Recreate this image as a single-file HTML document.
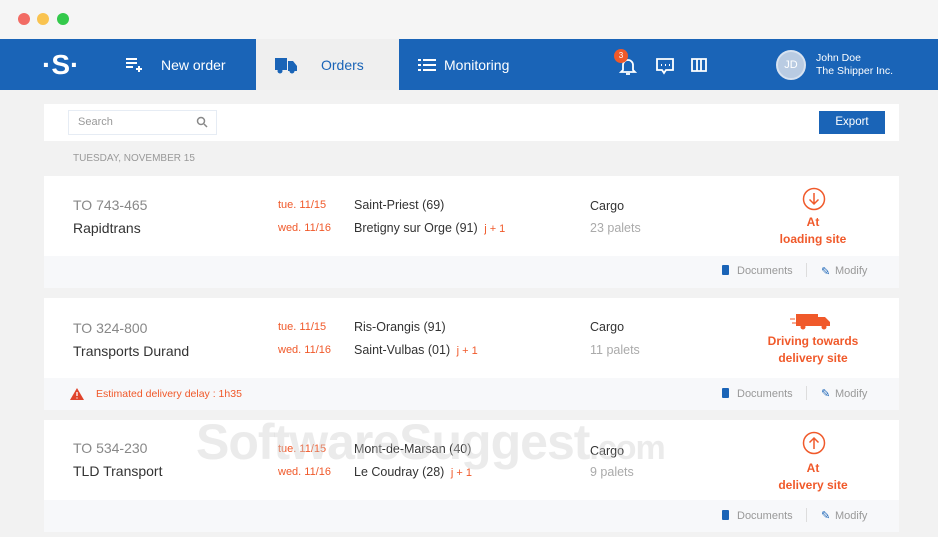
<!DOCTYPE html>
<html><head><meta charset="utf-8"><style>
*{margin:0;padding:0;box-sizing:border-box}
body{width:938px;height:537px;overflow:hidden;background:#f2f2f2;font-family:"Liberation Sans",sans-serif;position:relative}
.a{position:absolute}
.tb{left:0;top:0;width:938px;height:39px;background:#f5f5f5}
.dot{width:12px;height:12px;border-radius:50%;top:13px}
.nav{left:0;top:39px;width:938px;height:51px;background:#1a64b7}
.tab{left:256px;top:39px;width:143px;height:51px;background:#efefef}
.w{color:#fff;font-size:14px}
.card{left:44px;width:855px;height:80px;background:#fff}
.foot{left:44px;width:855px;height:32px;background:#f7f8fa}
.g{color:#888;font-size:14px}
.k{color:#333;font-size:14px}
.o{color:#f0592a;font-size:11px}
.c{color:#333;font-size:12.5px}
.st{color:#f0592a;font-size:12px;font-weight:bold;text-align:center;width:120px;line-height:17px}
.lk{color:#999;font-size:11px}
</style></head><body>
<div class="a tb"></div>
<div class="a dot" style="left:18px;background:#f26b64"></div>
<div class="a dot" style="left:37px;background:#f9c350"></div>
<div class="a dot" style="left:57px;background:#33c94b"></div>
<div class="a nav"></div>
<div class="a tab"></div>
<div class="a w" style="left:42px;top:49px;font-size:28px;font-weight:bold">·S·</div>
<svg class="a" style="left:125px;top:57px" width="20" height="16"><g stroke="#fff" stroke-width="2"><path d="M1 2h11M1 6h11M1 10h7M14 9v6M11 12h6"/></g></svg>
<div class="a w" style="left:161px;top:57px">New order</div>
<svg class="a" style="left:274px;top:56px" width="24" height="18"><rect x="1" y="2" width="12" height="12" fill="#1a64b7"/><path d="M14 5h5l4 5v5h-9z" fill="#1a64b7"/><circle cx="6" cy="15" r="2.5" fill="#1a64b7"/><circle cx="18" cy="15" r="2.5" fill="#1a64b7"/></svg>
<div class="a" style="left:321px;top:57px;color:#1a64b7;font-size:14px">Orders</div>
<svg class="a" style="left:418px;top:58px" width="18" height="15"><g stroke="#fff" stroke-width="2"><path d="M0 2h3M5 2h13M0 7h3M5 7h13M0 12h3M5 12h13"/></g></svg>
<div class="a w" style="left:444px;top:57px">Monitoring</div>
<svg class="a" style="left:619px;top:56px" width="18" height="20"><path d="M4 14V9a5 5 0 0110 0v5l2 2H2z" fill="none" stroke="#fff" stroke-width="1.8"/><path d="M7 18h4" stroke="#fff" stroke-width="1.8"/></svg>
<div class="a" style="left:614px;top:49px;width:14px;height:14px;border-radius:50%;background:#f0592a;color:#fff;font-size:8px;text-align:center;line-height:14px">3</div>
<svg class="a" style="left:655px;top:57px" width="20" height="18"><path d="M2 2h16v11H11l-2 3-2-3H2z" fill="none" stroke="#fff" stroke-width="1.8"/><path d="M6 8h1M10 8h1M14 8h1" stroke="#fff" stroke-width="2"/></svg>
<svg class="a" style="left:690px;top:57px" width="18" height="16"><path d="M2 2h14v12H2zM7 2v12M11 2v12" fill="none" stroke="#fff" stroke-width="1.8"/></svg>
<div class="a" style="left:776px;top:50px;width:30px;height:30px;border-radius:50%;background:#b9cbe2;border:2px solid #d7e2f0;color:#fff;font-size:11px;text-align:center;line-height:26px">JD</div>
<div class="a w" style="left:816px;top:52px;font-size:10.5px;line-height:13px">John Doe<br>The Shipper Inc.</div>

<div class="a" style="left:44px;top:104px;width:855px;height:37px;background:#fff"></div>
<div class="a" style="left:68px;top:110px;width:149px;height:25px;border:1px solid #e6ecf4;background:#fff"></div>
<div class="a" style="left:78px;top:116px;color:#999;font-size:11px">Search</div>
<svg class="a" style="left:196px;top:116px" width="12" height="12"><circle cx="5" cy="5" r="3.5" fill="none" stroke="#888" stroke-width="1.5"/><path d="M8 8l3 3" stroke="#888" stroke-width="1.5"/></svg>
<div class="a" style="left:819px;top:111px;width:66px;height:23px;background:#1a64b7;color:#fff;font-size:11.5px;text-align:center;line-height:23px">Export</div>
<div class="a" style="left:73px;top:153px;color:#999;font-size:10px">TUESDAY, NOVEMBER 15</div>

<!-- card 1 -->
<div class="a card" style="top:176px"></div>
<div class="a foot" style="top:256px"></div>
<div class="a g" style="left:73px;top:197px">TO 743-465</div>
<div class="a k" style="left:73px;top:220px">Rapidtrans</div>
<div class="a o" style="left:278px;top:199px">tue. 11/15</div>
<div class="a o" style="left:278px;top:222px">wed. 11/16</div>
<div class="a c" style="left:354px;top:198px">Saint-Priest (69)</div>
<div class="a c" style="left:354px;top:221px">Bretigny sur Orge (91) <span style="color:#f0592a;font-size:11px">&nbsp;j + 1</span></div>
<div class="a c" style="left:590px;top:199px">Cargo</div>
<div class="a c" style="left:590px;top:221px;color:#aaa">23 palets</div>
<svg class="a" style="left:802px;top:187px" width="24" height="24"><circle cx="12" cy="12" r="10.5" fill="none" stroke="#f0592a" stroke-width="1.5"/><path d="M12 6v11M7.5 12.5L12 17l4.5-4.5" fill="none" stroke="#f0592a" stroke-width="1.5"/></svg>
<div class="a st" style="left:753px;top:214px">At<br>loading site</div>
<div class="a" style="left:722px;top:265px;width:7px;height:10px;background:#1a64b7;border-radius:1px"></div>
<div class="a lk" style="left:737px;top:265px">Documents</div>
<div class="a" style="left:806px;top:263px;width:1px;height:14px;background:#ddd"></div>
<div class="a" style="left:821px;top:265px;color:#1a64b7;font-size:11px">✎</div>
<div class="a lk" style="left:835px;top:265px">Modify</div>

<!-- card 2 -->
<div class="a card" style="top:298px"></div>
<div class="a foot" style="top:378px"></div>
<div class="a g" style="left:73px;top:320px">TO 324-800</div>
<div class="a k" style="left:73px;top:343px">Transports Durand</div>
<div class="a o" style="left:278px;top:321px">tue. 11/15</div>
<div class="a o" style="left:278px;top:344px">wed. 11/16</div>
<div class="a c" style="left:354px;top:320px">Ris-Orangis (91)</div>
<div class="a c" style="left:354px;top:343px">Saint-Vulbas (01) <span style="color:#f0592a;font-size:11px">&nbsp;j + 1</span></div>
<div class="a c" style="left:590px;top:320px">Cargo</div>
<div class="a c" style="left:590px;top:343px;color:#aaa">11 palets</div>
<svg class="a" style="left:790px;top:311px" width="44" height="20"><path d="M6 3h22v12H6zM28 6h7l5 5v4H28z" fill="#f0592a"/><circle cx="13" cy="16" r="2.5" fill="#f0592a"/><circle cx="34" cy="16" r="2.5" fill="#f0592a"/><path d="M0 8h5M2 12h4" stroke="#f0592a"/></svg>
<div class="a st" style="left:753px;top:333px">Driving towards<br>delivery site</div>
<svg class="a" style="left:70px;top:388px" width="14" height="12"><path d="M7 0l7 12H0z" fill="#e0432b"/><path d="M7 4v4M7 9.5v1" stroke="#fff" stroke-width="1.3"/></svg>
<div class="a" style="left:96px;top:388px;color:#f0592a;font-size:10.5px">Estimated delivery delay : 1h35</div>
<div class="a" style="left:722px;top:388px;width:7px;height:10px;background:#1a64b7;border-radius:1px"></div>
<div class="a lk" style="left:737px;top:388px">Documents</div>
<div class="a" style="left:806px;top:386px;width:1px;height:14px;background:#ddd"></div>
<div class="a" style="left:821px;top:387px;color:#1a64b7;font-size:11px">✎</div>
<div class="a lk" style="left:835px;top:388px">Modify</div>

<!-- card 3 -->
<div class="a card" style="top:420px"></div>
<div class="a foot" style="top:500px"></div>
<div class="a g" style="left:73px;top:440px">TO 534-230</div>
<div class="a k" style="left:73px;top:463px">TLD Transport</div>
<div class="a o" style="left:278px;top:443px">tue. 11/15</div>
<div class="a o" style="left:278px;top:466px">wed. 11/16</div>
<div class="a c" style="left:354px;top:442px">Mont-de-Marsan (40)</div>
<div class="a c" style="left:354px;top:465px">Le Coudray (28) <span style="color:#f0592a;font-size:11px">&nbsp;j + 1</span></div>
<div class="a c" style="left:590px;top:444px">Cargo</div>
<div class="a c" style="left:590px;top:465px;color:#aaa">9 palets</div>
<svg class="a" style="left:802px;top:431px" width="24" height="24"><circle cx="12" cy="12" r="10.5" fill="none" stroke="#f0592a" stroke-width="1.5"/><path d="M12 18V7M7.5 11.5L12 7l4.5 4.5" fill="none" stroke="#f0592a" stroke-width="1.5"/></svg>
<div class="a st" style="left:753px;top:460px">At<br>delivery site</div>
<div class="a" style="left:722px;top:510px;width:7px;height:10px;background:#1a64b7;border-radius:1px"></div>
<div class="a lk" style="left:737px;top:510px">Documents</div>
<div class="a" style="left:806px;top:508px;width:1px;height:14px;background:#ddd"></div>
<div class="a" style="left:821px;top:509px;color:#1a64b7;font-size:11px">✎</div>
<div class="a lk" style="left:835px;top:510px">Modify</div>

<div class="a" style="left:196px;top:413px;color:rgba(205,205,205,0.4);font-size:50px;font-weight:bold;letter-spacing:-1px;white-space:nowrap">SoftwareSuggest<span style="font-size:34px">.com</span></div>
</body></html>
